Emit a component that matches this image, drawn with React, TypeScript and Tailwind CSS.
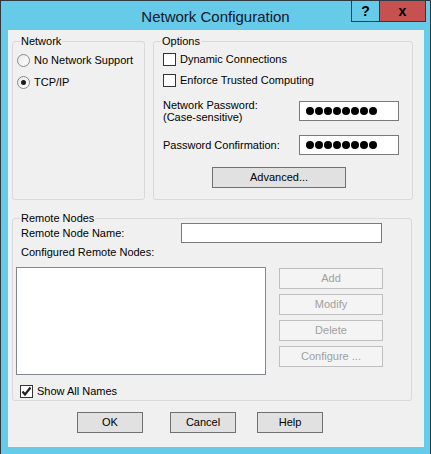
import React from 'react';

const font = { fontFamily: '"Liberation Sans", Arial, sans-serif' };

function Radio({ checked, label }: { checked?: boolean; label: string }) {
  return (
    <div className="flex h-[18px] items-center">
      <span className="flex h-[13px] w-[13px] items-center justify-center rounded-full border border-[#8a8a8a] bg-gradient-to-br from-[#e8e8e8] to-white">
        {checked && <span className="h-[5px] w-[5px] rounded-full bg-[#1c1c1c]" />}
      </span>
      <span className="ml-[4px]">{label}</span>
    </div>
  );
}

function Checkbox({ checked, label }: { checked?: boolean; label: string }) {
  return (
    <div className="flex h-[18px] items-center">
      <span className="flex h-[13px] w-[13px] items-center justify-center border border-[#333] bg-white">
        {checked && (
          <svg width="11" height="11" viewBox="0 0 11 11">
            <path d="M1.5 5.5 L4 8.5 L9.5 1.5" fill="none" stroke="#222" strokeWidth="2.2" />
          </svg>
        )}
      </span>
      <span className="ml-[4px]">{label}</span>
    </div>
  );
}

function Dots() {
  return (
    <div className="ml-[6px] flex gap-[1px]">
      {Array.from({ length: 8 }).map((_, i) => (
        <span key={i} className="h-[8px] w-[8px] rounded-full bg-black" />
      ))}
    </div>
  );
}

function SideButton({ label }: { label: string }) {
  return (
    <div className="flex h-[21px] w-[104px] items-center justify-center border border-[#bfbfbf] bg-[#f4f4f4] text-[#a0a0a0]">
      {label}
    </div>
  );
}

function Button({ label, className }: { label: string; className?: string }) {
  return (
    <div
      className={`flex h-[21px] items-center justify-center border border-[#707070] bg-[#e1e1e1] ${className ?? ''}`}
    >
      {label}
    </div>
  );
}

export default function App() {
  return (
    <div
      style={font}
      className="h-[454px] w-[431px] border-l border-r border-t border-[#2e3a40] bg-[#66cbe8] text-[11px] leading-[13px] text-black"
    >
      {/* title bar */}
      <div className="grid h-[29px] grid-cols-[1fr_auto_1fr]">
        <div />
        <div className="flex items-center pt-[1px] text-[15px] text-[#15152e]">Network Configuration</div>
        <div className="flex items-start justify-end pr-[4px]">
          <div className="flex h-[21px] w-[28px] items-center justify-center border-b border-l border-[#2e3a40] text-[14px] font-bold">
            ?
          </div>
          <div className="flex h-[21px] w-[47px] items-center justify-center border-b border-l border-r border-[#2e3a40] bg-[#c75050] text-[14px] font-bold">
            x
          </div>
        </div>
      </div>

      {/* client area */}
      <div className="ml-[7px] h-[417px] w-[416px] bg-[#f0f0f0] px-[4px]">
        <div className="flex gap-[8px] pt-[5px]">
          <fieldset className="h-[165px] w-[133px] rounded-[3px] border border-[#d9d9d9] pl-[4px]">
            <legend className="ml-[3px] px-[1px]">Network</legend>
            <div className="mt-[3px]">
              <Radio label="No Network Support" />
            </div>
            <div className="mt-[4px]">
              <Radio checked label="TCP/IP" />
            </div>
          </fieldset>

          <fieldset className="h-[165px] w-[260px] rounded-[3px] border border-[#d9d9d9] pl-[4px]">
            <legend className="ml-[3px] px-[1px]">Options</legend>
            <div className="ml-[5px]">
              <div className="mt-[2px]">
                <Checkbox label="Dynamic Connections" />
              </div>
              <div className="mt-[3px]">
                <Checkbox label="Enforce Trusted Computing" />
              </div>
              <div className="mt-[10px] flex items-start">
                <div className="w-[136px] leading-[12px]">
                  Network Password:
                  <br />
                  (Case-sensitive)
                </div>
                <div className="mt-[2px] flex h-[20px] w-[100px] items-center border border-[#7a7a7a] bg-white">
                  <Dots />
                </div>
              </div>
              <div className="mt-[12px] flex items-center">
                <div className="w-[136px]">Password Confirmation:</div>
                <div className="flex h-[20px] w-[100px] items-center border border-[#7a7a7a] bg-white">
                  <Dots />
                </div>
              </div>
              <Button label="Advanced..." className="ml-[49px] mt-[12px] w-[134px]" />
            </div>
          </fieldset>
        </div>

        <fieldset className="mt-[12px] h-[189px] w-[400px] rounded-[3px] border border-[#d9d9d9] pl-[3px]">
          <legend className="ml-[4px] px-[1px]">Remote Nodes</legend>
          <div className="-mt-[2px] flex items-center">
            <div className="w-[165px] pl-[5px]">Remote Node Name:</div>
            <div className="h-[20px] w-[201px] border border-[#7a7a7a] bg-white" />
          </div>
          <div className="mt-[3px] pl-[5px]">Configured Remote Nodes:</div>
          <div className="mt-[8px] flex items-start">
            <div className="h-[108px] w-[250px] border border-[#828790] bg-white" />
            <div className="ml-[13px] mt-[1px] flex flex-col gap-[5px]">
              <SideButton label="Add" />
              <SideButton label="Modify" />
              <SideButton label="Delete" />
              <SideButton label="Configure ..." />
            </div>
          </div>
          <div className="ml-[4px] mt-[7px]">
            <Checkbox checked label="Show All Names" />
          </div>
        </fieldset>

        <div className="mt-[11px] flex">
          <Button label="OK" className="ml-[65px] w-[66px]" />
          <Button label="Cancel" className="ml-[27px] w-[66px]" />
          <Button label="Help" className="ml-[21px] w-[66px]" />
        </div>
      </div>
    </div>
  );
}
